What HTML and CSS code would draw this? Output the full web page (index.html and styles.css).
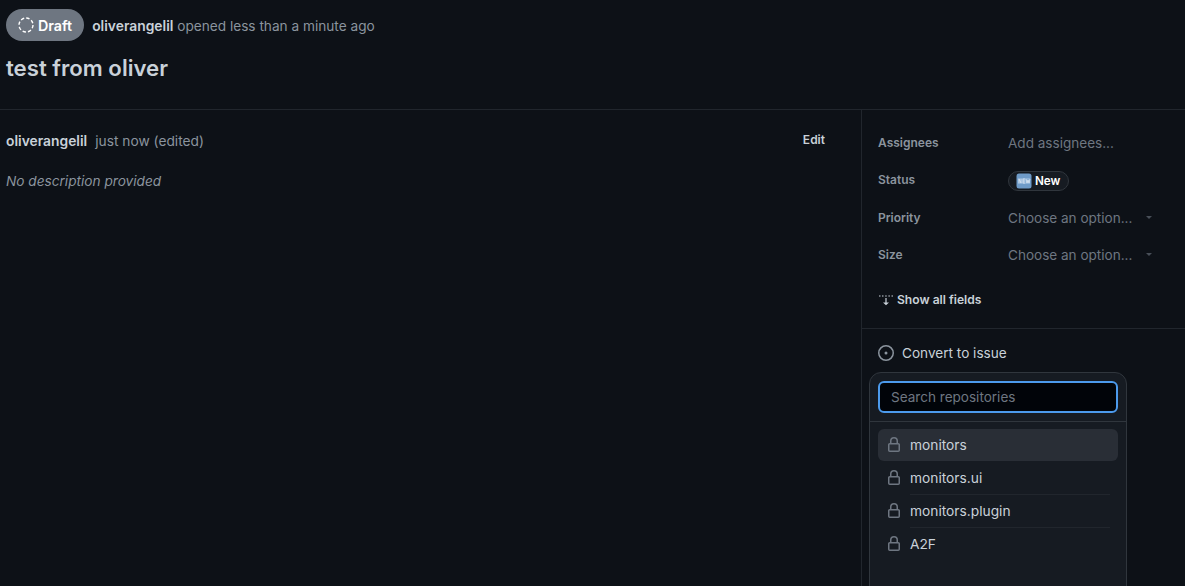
FILE: index.html
```html
<!DOCTYPE html>
<html lang="en">
<head>
<meta charset="utf-8">
<title>test from oliver</title>
<link rel="stylesheet" href="styles.css">
</head>
<body>
<div class="page">
  <header class="header">
    <div class="meta">
      <span class="pill">
        <svg class="pill-icon" width="16" height="16" viewBox="0 0 16 16"><circle cx="8" cy="8" r="7" fill="none" stroke="currentColor" stroke-width="1.4" stroke-dasharray="3.4 2.1"/></svg>
        Draft
      </span>
      <span class="meta-text"><strong class="author">oliverangelil</strong> opened less than a minute ago</span>
    </div>
    <h1 class="title">test from oliver</h1>
  </header>
  <div class="body">
    <main class="main">
      <div class="comment-head">
        <div><strong class="author">oliverangelil</strong><span class="when">just now (edited)</span></div>
        <button class="edit">Edit</button>
      </div>
      <p class="empty">No description provided</p>
    </main>
    <aside class="side">
      <div class="fields">
        <div class="field"><span class="label">Assignees</span><span class="value">Add assignees...</span></div>
        <div class="field"><span class="label label-status">Status</span><span class="badge"><svg class="new-icon" width="16" height="16" viewBox="0 0 16 16"><rect x="0.5" y="0.5" width="15" height="15" rx="2.5" fill="#6f9bc8"/><rect x="2" y="5" width="12" height="6" fill="#8fb3d8"/><path d="M3 10V6l2 4V6M7 6v4M7 6h2M7 8h2M7 10h2M10 6l1 4 1-3 1 3 1-4" fill="none" stroke="#e6eef7" stroke-width=".7"/></svg>New</span></div>
        <div class="field"><span class="label">Priority</span><span class="value">Choose an option...</span><span class="caret"></span></div>
        <div class="field"><span class="label">Size</span><span class="value">Choose an option...</span><span class="caret"></span></div>
        <button class="show-all">
          <svg width="16" height="16" viewBox="0 0 16 16" fill="currentColor"><path d="M1 3.5h1.5v1H1zM4 3.5h1.5v1H4zM7.2 3.5h1.5v1H7.2zM10.4 3.5h1.5v1h-1.5zM13.5 3.5H15v1h-1.5z"/><path d="M7.4 6h1.2v4.5H11L8 13.2 5 10.5h2.4z"/></svg>
          Show all fields
        </button>
      </div>
      <div class="actions">
        <div class="convert">
          <svg width="16" height="16" viewBox="0 0 16 16" fill="currentColor"><path d="M8 9.5a1.5 1.5 0 1 0 0-3 1.5 1.5 0 0 0 0 3Z"/><path d="M8 0a8 8 0 1 1 0 16A8 8 0 0 1 8 0ZM1.5 8a6.5 6.5 0 1 0 13 0 6.5 6.5 0 0 0-13 0Z"/></svg>
          <span class="convert-label">Convert to issue</span>
        </div>
      </div>
      <div class="popup">
        <div class="search-wrap"><input class="search" type="text" placeholder="Search repositories"></div>
        <ul class="repos">
          <li class="repo active"><svg class="lock" width="16" height="16" viewBox="0 0 16 16" fill="currentColor"><path d="M4 4a4 4 0 0 1 8 0v2h.25c.966 0 1.75.784 1.75 1.75v5.5A1.75 1.75 0 0 1 12.25 15h-8.5A1.75 1.75 0 0 1 2 13.25v-5.5C2 6.784 2.784 6 3.75 6H4Zm8.25 3.5h-8.5a.25.25 0 0 0-.25.25v5.5c0 .138.112.25.25.25h8.5a.25.25 0 0 0 .25-.25v-5.5a.25.25 0 0 0-.25-.25ZM10.5 6V4a2.5 2.5 0 1 0-5 0v2Z"/></svg><span class="repo-name">monitors</span></li>
          <li class="repo"><svg class="lock" width="16" height="16" viewBox="0 0 16 16" fill="currentColor"><path d="M4 4a4 4 0 0 1 8 0v2h.25c.966 0 1.75.784 1.75 1.75v5.5A1.75 1.75 0 0 1 12.25 15h-8.5A1.75 1.75 0 0 1 2 13.25v-5.5C2 6.784 2.784 6 3.75 6H4Zm8.25 3.5h-8.5a.25.25 0 0 0-.25.25v5.5c0 .138.112.25.25.25h8.5a.25.25 0 0 0 .25-.25v-5.5a.25.25 0 0 0-.25-.25ZM10.5 6V4a2.5 2.5 0 1 0-5 0v2Z"/></svg><span class="repo-name">monitors.ui</span></li>
          <li class="repo"><svg class="lock" width="16" height="16" viewBox="0 0 16 16" fill="currentColor"><path d="M4 4a4 4 0 0 1 8 0v2h.25c.966 0 1.75.784 1.75 1.75v5.5A1.75 1.75 0 0 1 12.25 15h-8.5A1.75 1.75 0 0 1 2 13.25v-5.5C2 6.784 2.784 6 3.75 6H4Zm8.25 3.5h-8.5a.25.25 0 0 0-.25.25v5.5c0 .138.112.25.25.25h8.5a.25.25 0 0 0 .25-.25v-5.5a.25.25 0 0 0-.25-.25ZM10.5 6V4a2.5 2.5 0 1 0-5 0v2Z"/></svg><span class="repo-name">monitors.plugin</span></li>
          <li class="repo"><svg class="lock" width="16" height="16" viewBox="0 0 16 16" fill="currentColor"><path d="M4 4a4 4 0 0 1 8 0v2h.25c.966 0 1.75.784 1.75 1.75v5.5A1.75 1.75 0 0 1 12.25 15h-8.5A1.75 1.75 0 0 1 2 13.25v-5.5C2 6.784 2.784 6 3.75 6H4Zm8.25 3.5h-8.5a.25.25 0 0 0-.25.25v5.5c0 .138.112.25.25.25h8.5a.25.25 0 0 0 .25-.25v-5.5a.25.25 0 0 0-.25-.25ZM10.5 6V4a2.5 2.5 0 1 0-5 0v2Z"/></svg><span class="repo-name">A2F</span></li>
        </ul>
      </div>
    </aside>
  </div>
</div>
</body>
</html>
```
FILE: styles.css
```css
* { box-sizing: border-box; }
html, body { margin: 0; height: 100%; background: #0d1117; }
body { font-family: Inter, "Liberation Sans", sans-serif; font-size: 14px; color: #c9d1d9; overflow: hidden; }
.page { height: 586px; display: flex; flex-direction: column; overflow: hidden; }
.header { height: 110px; padding: 9px 6px 0; border-bottom: 1px solid #21262d; flex: none; }
.meta { display: flex; align-items: center; gap: 8px; height: 32px; }
.pill { display: inline-flex; align-items: center; gap: 4px; height: 32px; padding: 0 12px; border-radius: 16px; background: #6e7681; color: #fff; font-weight: 600; font-size: 14.3px; }
.pill-icon { flex: none; }
.meta-text { color: #8b949e; font-size: 13.65px; padding-top: 2px; }
.author { color: #c9d1d9; font-weight: 600; font-size: 13.85px; }
.title { margin: 12px 0 0; font-size: 22.2px; line-height: 30px; font-weight: 600; color: #c9d1d9; }
.body { flex: 1; display: flex; min-height: 0; }
.main { width: 861px; flex: none; padding: 19px 36px 0 6px; }
.comment-head { display: flex; justify-content: space-between; align-items: center; height: 22px; }
.when { color: #8b949e; margin-left: 8px; font-size: 13.75px; }
.edit { background: none; border: 0; padding: 0 0 2px; color: #c9d1d9; font: 600 12px Inter, sans-serif; }
.empty { margin: 19px 0 0; font-style: italic; font-size: 13.65px; color: #8b949e; line-height: 22px; }
.side { flex: 1; position: relative; border-left: 1px solid #21262d; }
.fields { padding: 14px 16px 0; height: 219px; border-bottom: 1px solid #21262d; }
.field { display: flex; align-items: center; height: 37.4px; }
.label { width: 130px; flex: none; color: #8b949e; font-size: 12px; font-weight: 600; }
.label-status { padding-bottom: 2px; }
.value { color: #6e7681; font-size: 13.55px; padding-top: 1px; }
.caret { margin-left: 13.5px; width: 0; height: 0; border: 3.5px solid transparent; border-top-color: #484f58; border-bottom: 0; }
.badge { display: inline-flex; align-items: center; gap: 3px; height: 20px; margin-top: 2px; padding: 0 8px 0 7px; border: 1px solid #30363d; border-radius: 10px; background: #161b22; color: #fff; font-size: 11.7px; font-weight: 600; }
.new-icon { flex: none; }
.show-all { display: flex; align-items: center; gap: 3px; margin-top: 18px; background: none; border: 0; padding: 0; color: #c9d1d9; font: 600 12.1px Inter, sans-serif; }
.actions { padding: 16px; }
.convert { display: flex; align-items: center; gap: 8px; height: 16px; color: #c9d1d9; font-size: 13.6px; }
.convert svg { color: #8b949e; }
.popup { position: absolute; left: 7px; top: 262px; width: 258px; height: 300px; background: #161b22; border: 1px solid #30363d; border-radius: 12px; }
.search-wrap { padding: 8px 8px 0; border-bottom: 1px solid #30363d; height: 49px; }
.search { display: block; width: 100%; height: 32px; padding: 0 11px; border: 2px solid #4c9aec; border-radius: 6px; background: #010409; color: #c9d1d9; font: 13.55px Inter, sans-serif; outline: none; }
.search::placeholder { color: #6e7681; }
.repos { list-style: none; margin: 0; padding: 7px 8px; }
.repo { display: flex; align-items: center; gap: 8px; height: 33px; padding-left: 8px; padding-bottom: 1px; position: relative; color: #c9d1d9; font-size: 13.75px; }
.repo.active { height: 32px; margin-bottom: 1px; background: #292e36; border-radius: 6px; }
.lock { color: #6e7681; flex: none; }
.repo-name { flex: 1; }
.repo:nth-child(n+3)::before { content: ""; position: absolute; left: 32px; right: 8px; top: -1px; height: 1px; background: #21262d; }
```
